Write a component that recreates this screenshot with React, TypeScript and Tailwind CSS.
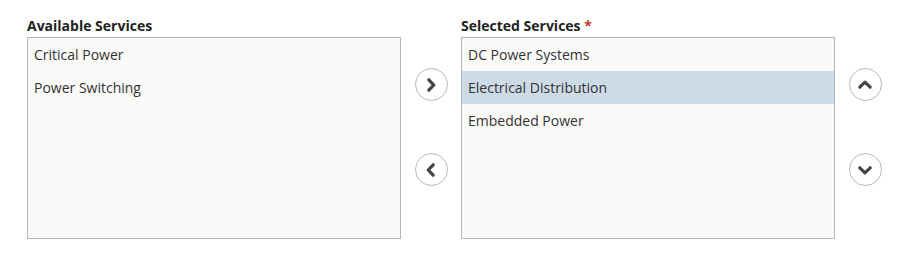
import { useState } from "react";

const available = ["Critical Power", "Power Switching"];
const selected = ["DC Power Systems", "Electrical Distribution", "Embedded Power"];

function Chevron({ dir }: { dir: "left" | "right" | "up" | "down" }) {
  const rot = { right: 0, down: 90, left: 180, up: 270 }[dir];
  return (
    <svg width="16" height="16" viewBox="0 0 16 16" style={{ transform: `rotate(${rot}deg)` }}>
      <path d="M5.8 2.8 L10.8 8 L5.8 13.2" fill="none" stroke="#444" strokeWidth="3.2" strokeLinecap="round" strokeLinejoin="round" />
    </svg>
  );
}

function CircleButton({ dir }: { dir: "left" | "right" | "up" | "down" }) {
  return (
    <button className="flex h-[33px] w-[33px] items-center justify-center rounded-full border border-[#b8b8b8] bg-white">
      <Chevron dir={dir} />
    </button>
  );
}

function ListBox({ items, active }: { items: string[]; active?: number }) {
  return (
    <div className="h-[202px] w-[374px] border border-[#b5b5b5] bg-[#fafaf8]">
      {items.map((item, i) => (
        <div
          key={item}
          className={
            "flex h-[33px] items-center px-[6px] text-[14px] text-[#333] " +
            (i === active ? "bg-[#cddbe7]" : "")
          }
        >
          {item}
        </div>
      ))}
    </div>
  );
}

export default function App() {
  const [active] = useState(1);
  return (
    <div className="flex h-[267px] w-[903px] bg-white pl-[27px] pt-[17px]" style={{ fontFamily: "'Open Sans', sans-serif" }}>
      <div className="flex flex-col">
        <div className="mb-[2px] h-[18px] text-[14px] font-bold leading-[18px] text-[#222]">Available Services</div>
        <ListBox items={available} />
      </div>
      <div className="flex w-[60px] flex-col items-center pt-[51px]">
        <CircleButton dir="right" />
        <div className="h-[52px]" />
        <CircleButton dir="left" />
      </div>
      <div className="flex flex-col">
        <div className="mb-[2px] h-[18px] text-[14px] font-bold leading-[18px] text-[#222]">
          Selected Services <span className="text-[#c0392b]">*</span>
        </div>
        <ListBox items={selected} active={active} />
      </div>
      <div className="flex w-[60px] flex-col items-center pt-[51px]">
        <CircleButton dir="up" />
        <div className="h-[52px]" />
        <CircleButton dir="down" />
      </div>
    </div>
  );
}
